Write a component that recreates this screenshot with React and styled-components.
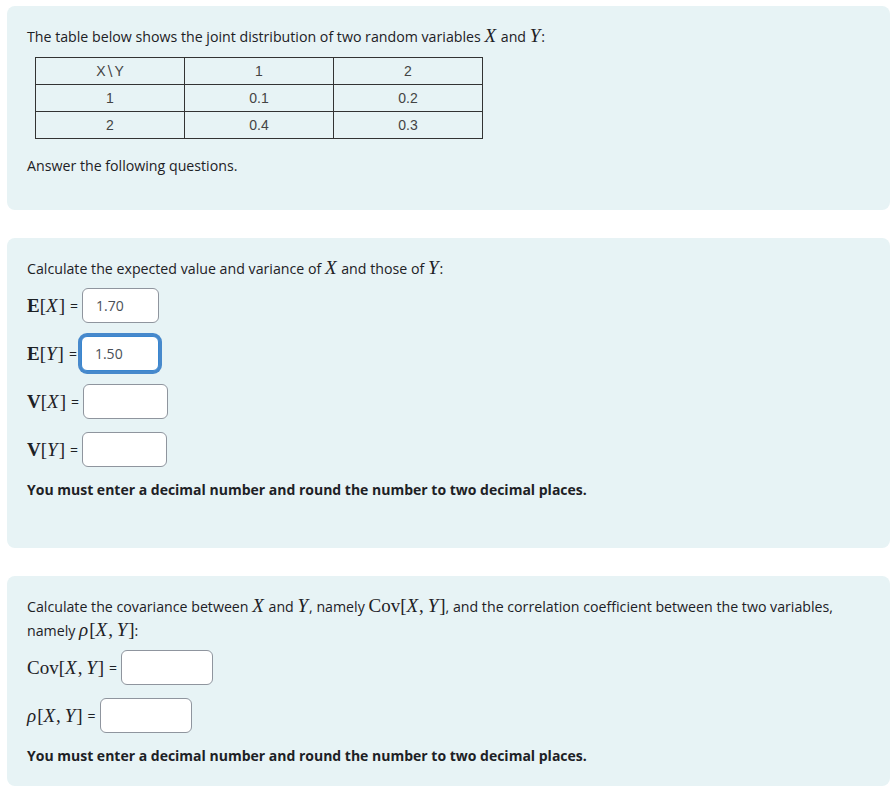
import React from "react";
import styled, { createGlobalStyle } from "styled-components";

const GlobalStyle = createGlobalStyle`
  html, body { margin: 0; padding: 0; background: #ffffff; }
  body {
    font-family: "Open Sans", "Noto Sans", sans-serif;
    font-size: 14.2px;
    color: #1d2125;
  }
`;

const Page = styled.div`
  display: flex;
  flex-direction: column;
  gap: 28px;
  padding: 6px 6px 14px 7px;
`;

const Panel = styled.section`
  background: #e7f3f5;
  border-radius: 8px;
  padding: 19px 20px ${(p) => p.$pb}px 20px;
`;

const Para = styled.p`
  margin: 0;
  line-height: 24px;
`;

const Plain = styled.p`
  margin: ${(p) => p.$top || 0}px 0 0 0;
  line-height: 21px;
  font-weight: ${(p) => (p.$bold ? 700 : 400)};
  font-size: ${(p) => (p.$bold ? "14px" : "inherit")};
`;

const M = styled.span`
  font-family: "Liberation Serif", "DejaVu Serif", serif;
  font-size: 19px;
  line-height: 1;
  font-style: ${(p) => (p.$roman ? "normal" : "italic")};
  font-weight: ${(p) => (p.$heavy ? 700 : 400)};
  padding-right: ${(p) => (p.$roman ? 0 : 1)}px;
  color: #1d2125;
`;

const Grid = styled.table`
  margin: 8px 0 0 8px;
  border-collapse: collapse;
  font-family: "Liberation Sans", Arial, sans-serif;
  font-size: 14px;
  color: #444;
`;

const Cell = styled.td`
  width: 148px;
  height: 26px;
  padding: 0;
  border: 1px solid #333;
  text-align: center;
  vertical-align: middle;
`;

const Rows = styled.div`
  display: flex;
  flex-direction: column;
  gap: 12px;
  margin-top: 6px;
`;

const Row = styled.div`
  display: flex;
  align-items: center;
  height: 36px;
`;

const Label = styled.span`
  display: inline-flex;
  align-items: baseline;
  white-space: pre;
`;

const Eq = styled.span`
  margin: 0 4px 0 5px;
  font-size: 14px;
`;

const Field = styled.input`
  box-sizing: border-box;
  width: ${(p) => p.$w}px;
  height: 35px;
  border: 1px solid #8f959e;
  border-radius: 6px;
  background: #fff;
  padding: 0 13px;
  font-family: "Open Sans", "Noto Sans", sans-serif;
  font-size: 14px;
  color: #495057;
  outline: none;
  ${(p) =>
    p.$focus &&
    `
    border-color: #3a86cf;
    box-shadow: 0 0 0 3px #4789cc;
  `}
`;

const Br = ({ children }) => <M $roman>{children}</M>;

function Answer({ label, w, value, focus }) {
  return (
    <Row>
      <Label>{label}</Label>
      <Eq>=</Eq>
      <Field $w={w} defaultValue={value} $focus={focus} readOnly />
    </Row>
  );
}

const XY = () => (
  <>
    <Br>[</Br>
    <M>X</M>
    <Br>,&thinsp;</Br>
    <M>Y</M>
    <Br>]</Br>
  </>
);

export default function App() {
  const table = [
    ["X\u2216Y", "1", "2"],
    ["1", "0.1", "0.2"],
    ["2", "0.4", "0.3"],
  ];
  return (
    <>
      <GlobalStyle />
      <Page>
        <Panel $pb={34}>
          <Para>
            The table below shows the joint distribution of two random variables <M>X</M> and <M>Y</M>:
          </Para>
          <Grid>
            <tbody>
              {table.map((r, i) => (
                <tr key={i}>
                  {r.map((c, j) => (
                    <Cell key={j}>{c}</Cell>
                  ))}
                </tr>
              ))}
            </tbody>
          </Grid>
          <Plain $top={16}>Answer the following questions.</Plain>
        </Panel>

        <Panel $pb={48}>
          <Para>
            Calculate the expected value and variance of <M>X</M> and those of <M>Y</M>:
          </Para>
          <Rows>
            <Answer
              label={<><M $roman $heavy>E</M><Br>[</Br><M>X</M><Br>]</Br></>}
              w={77}
              value="1.70"
            />
            <Answer
              label={<><M $roman $heavy>E</M><Br>[</Br><M>Y</M><Br>]</Br></>}
              w={78}
              value="1.50"
              focus
            />
            <Answer
              label={<><M $roman $heavy>V</M><Br>[</Br><M>X</M><Br>]</Br></>}
              w={85}
              value=""
            />
            <Answer
              label={<><M $roman $heavy>V</M><Br>[</Br><M>Y</M><Br>]</Br></>}
              w={85}
              value=""
            />
          </Rows>
          <Plain $top={12} $bold>
            You must enter a decimal number and round the number to two decimal places.
          </Plain>
        </Panel>

        <Panel $pb={20}>
          <Para>
            Calculate the covariance between <M>X</M> and <M>Y</M>, namely <M $roman>Cov</M><XY />, and the correlation coefficient between the two variables,
            namely <M>ρ</M><XY />:
          </Para>
          <Rows>
            <Answer label={<><M $roman>Cov</M><XY /></>} w={92} value="" />
            <Answer label={<><M>ρ</M><XY /></>} w={92} value="" />
          </Rows>
          <Plain $top={12} $bold>
            You must enter a decimal number and round the number to two decimal places.
          </Plain>
        </Panel>
      </Page>
    </>
  );
}
